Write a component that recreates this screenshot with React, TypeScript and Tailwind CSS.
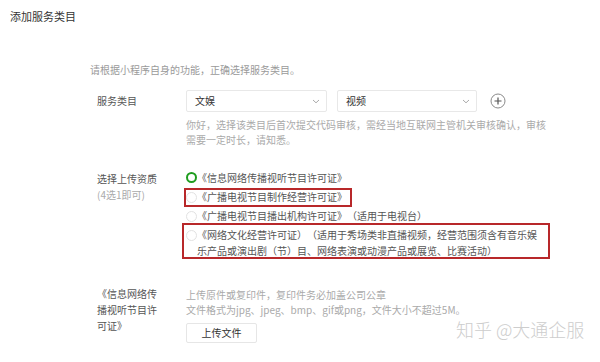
import React from "react";

function Chevron() {
  return (
    <svg width="8" height="5" viewBox="0 0 8 5" className="block">
      <path d="M1 1 L4 3.8 L7 1" fill="none" stroke="#aaa" strokeWidth="1" />
    </svg>
  );
}

function Select({ label, w }: { label: string; w: string }) {
  return (
    <div className={`${w} h-[22px] border border-[#e8e8e8] rounded-[2px] flex items-center justify-between pl-[8px] pr-[6px] text-[#333] bg-white`}>
      <span className="leading-[16px]">{label}</span>
      <Chevron />
    </div>
  );
}

function Radio({ checked }: { checked?: boolean }) {
  return checked ? (
    <span className="w-[11px] h-[11px] rounded-full border-[2.5px] border-[#1f9d1f] bg-white shrink-0" />
  ) : (
    <span className="w-[11px] h-[11px] rounded-full border border-[#e2e2e2] bg-white shrink-0" />
  );
}

export default function App() {
  return (
    <div className="w-[600px] h-[362px] bg-white relative overflow-hidden font-['Noto_Sans_CJK_SC','Noto_Sans',sans-serif] text-[10px] text-[#555] [text-spacing-trim:space-all]">
      <div className="pt-[8px] pl-[10px] text-[11px] leading-[16px] text-[#333]">添加服务类目</div>

      <div className="mt-[38px] pl-[90px] leading-[16px] text-[#9a9a9a]">请根据小程序自身的功能，正确选择服务类目。</div>

      <div className="mt-[12px] pl-[97px] flex">
        <div className="w-[89px] leading-[22px] text-[#555]">服务类目</div>
        <div className="flex flex-col">
          <div className="flex items-center">
            <Select label="文娱" w="w-[141px]" />
            <div className="w-[10px]" />
            <Select label="视频" w="w-[140px]" />
            <svg width="16" height="16" viewBox="0 0 16 16" className="ml-[13px] block">
              <circle cx="8" cy="8" r="7" fill="none" stroke="#8a8a8a" strokeWidth="1" />
              <path d="M8 4.5 V11.5 M4.5 8 H11.5" stroke="#555" strokeWidth="1.2" />
            </svg>
          </div>
          <div className="mt-[5px] leading-[15px] text-[#aaa] whitespace-nowrap">
            你好，选择该类目后首次提交代码审核，需经当地互联网主管机关审核确认，审核
            <br />
            需要一定时长，请知悉。
          </div>
        </div>
      </div>

      <div className="mt-[21px] pl-[97px] flex">
        <div className="w-[89px] pt-[3px] leading-[16px]">
          <div className="text-[#555]">选择上传资质</div>
          <div className="text-[#aaa]">(4选1即可)</div>
        </div>
        <div className="flex flex-col text-[#555] whitespace-nowrap">
          <div className="h-[19px] flex items-center">
            <Radio checked />
            <span className="leading-[16px]">《信息网络传播视听节目许可证》</span>
          </div>
          <div className="h-[20px] flex items-center relative">
            <Radio />
            <span className="leading-[16px]">《广播电视节目制作经营许可证》</span>
            <div className="absolute left-[-2px] top-[1px] w-[168px] h-[19px] border-2 border-[#b8282a]" />
          </div>
          <div className="h-[18px] flex items-center">
            <Radio />
            <span className="leading-[16px]">《广播电视节目播出机构许可证》（适用于电视台）</span>
          </div>
          <div className="flex items-start relative pt-[1px] mt-[1px]">
            <span className="mt-[3px] flex">
              <Radio />
            </span>
            <span className="leading-[16px]">
              《网络文化经营许可证）（适用于秀场类非直播视频，经营范围须含有音乐娱
              <br />
              乐产品或演出剧（节）目、网络表演或动漫产品或展览、比赛活动）
            </span>
            <div className="absolute left-[-4px] top-[-3px] w-[368px] h-[36px] border-2 border-[#b8282a]" />
          </div>
        </div>
      </div>

      <div className="mt-[27px] pl-[97px] flex">
        <div className="w-[89px] leading-[16px] text-[#555]">
          《信息网络传
          <br />
          播视听节目许
          <br />
          可证》
        </div>
        <div className="flex flex-col items-start">
          <div className="leading-[15px] text-[#aaa] whitespace-nowrap pt-[1px]">
            上传原件或复印件，复印件务必加盖公司公章
            <br />
            文件格式为jpg、jpeg、bmp、gif或png，文件大小不超过5M。
          </div>
          <button className="mt-[6px] w-[71px] h-[20px] border border-[#e6e6e6] rounded-[2px] bg-white text-[#333] text-[10px] leading-[16px]">
            上传文件
          </button>
        </div>
      </div>

      <div className="absolute left-[456px] top-[317px] text-[18px] leading-[24px] text-[#cdcdcd] font-light whitespace-nowrap">
        知乎 @大通企服
      </div>
    </div>
  );
}
